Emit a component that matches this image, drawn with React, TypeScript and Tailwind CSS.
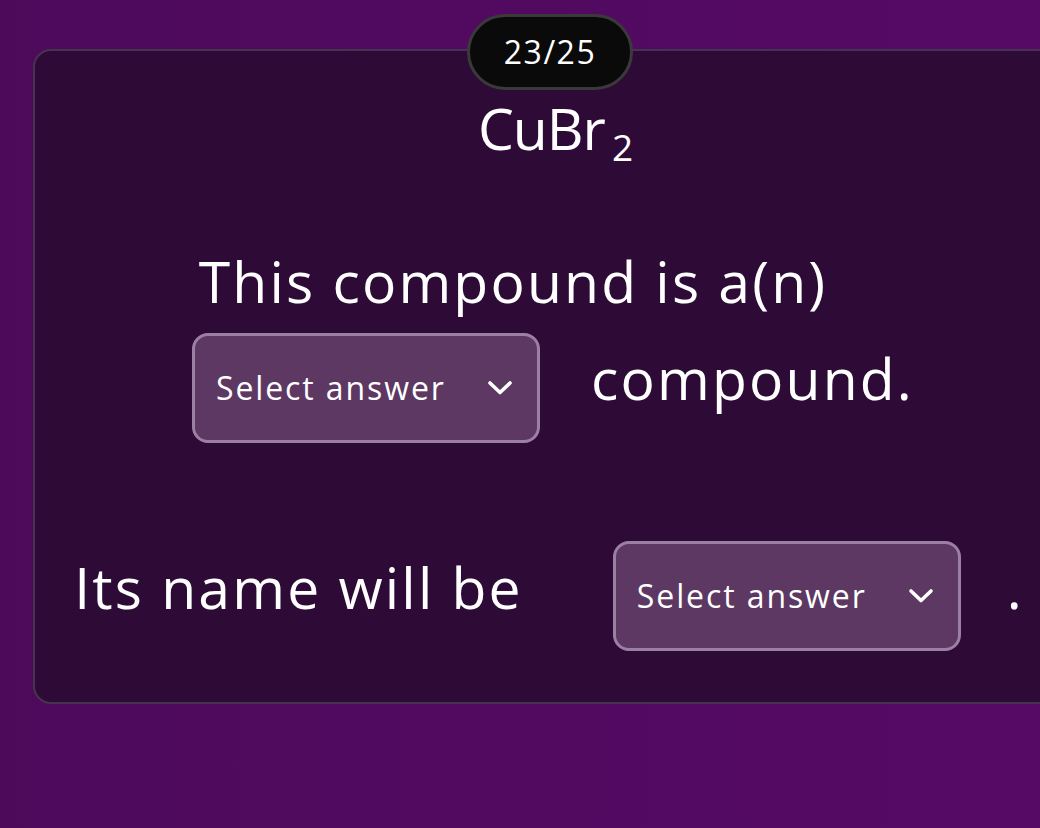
import React from "react";

function Chevron() {
  return (
    <svg width="26" height="16" viewBox="0 0 26 16" fill="none" className="shrink-0">
      <path d="M3 3 L13 12.5 L23 3" stroke="white" strokeWidth="3.6" strokeLinecap="round" strokeLinejoin="round" />
    </svg>
  );
}

function SelectBox() {
  return (
    <div className="flex h-[110px] w-[348px] shrink-0 items-center justify-between rounded-[16px] border-[3px] border-[#9b80a3] bg-[#5c3862] pl-[21px] pr-[24px]">
      <span className="text-[32px] tracking-[1.9px] text-white">Select answer</span>
      <Chevron />
    </div>
  );
}

export default function App() {
  return (
    <div
      className="h-[828px] w-[1040px] overflow-hidden bg-gradient-to-r from-[#4d0a5b] to-[#560a66] pl-[33px] pt-[49px]"
      style={{ fontFamily: "'Open Sans', 'Noto Sans', sans-serif" }}
    >
      <div className="relative h-[655px] w-[1030px] rounded-[18px] border-2 border-[#47334f] bg-[#2e0a37]">
        <div className="absolute left-[432px] top-[-37px] flex h-[76px] w-[166px] items-center justify-center rounded-full border-[3px] border-[#3a3a3a] bg-[#0a0a0a]">
          <span className="text-[32px] tracking-[1.5px] text-white">23/25</span>
        </div>
        <div className="flex flex-col items-center text-white">
          <div className="mt-[42px] ml-[14px] text-[57px] leading-[70px] tracking-[-1px]">
            CuBr<span className="relative top-[11px] ml-[7px] text-[37px]">2</span>
          </div>
          <div className="mt-[75px] mr-[70px] text-[57px] leading-[70px] tracking-[2.2px]">This compound is a(n)</div>
          <div className="mt-[17px] ml-[10px] flex items-center gap-[51px]">
            <SelectBox />
            <span className="pb-[20px] text-[57px] leading-[70px] tracking-[2.2px]">compound.</span>
          </div>
          <div className="mt-[98px] flex items-center">
            <span className="pb-[18px] text-[57px] leading-[70px] tracking-[2.2px]">Its name will be</span>
            <div className="ml-[90px]">
              <SelectBox />
            </div>
            <span className="ml-[46px] pb-[18px] text-[57px] leading-[70px]">.</span>
          </div>
        </div>
      </div>
    </div>
  );
}
